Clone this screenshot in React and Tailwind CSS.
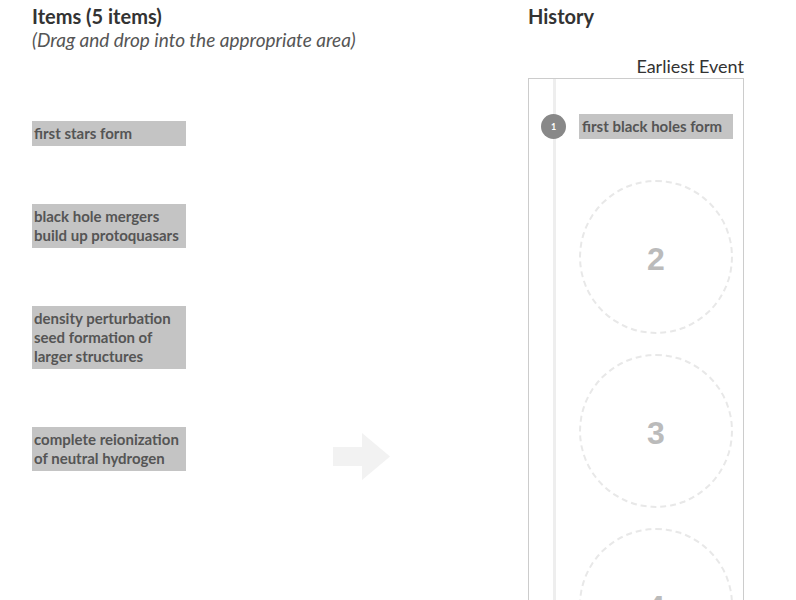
import React from 'react';

const items = [
  ['first stars form'],
  ['black hole mergers', 'build up protoquasars'],
  ['density perturbation', 'seed formation of', 'larger structures'],
  ['complete reionization', 'of neutral hydrogen'],
];

function Chip({ lines, className = '' }) {
  return (
    <div className={`w-[154px] bg-[#c4c4c4] px-[2px] py-[3px] text-[15px] font-bold leading-[19px] text-[#555] ${className}`}>
      {lines.map((l) => (
        <div key={l} className="whitespace-nowrap">{l}</div>
      ))}
    </div>
  );
}

function Slot({ n }) {
  return (
    <div className="flex h-[154px] w-[154px] items-center justify-center rounded-full border-2 border-dashed border-[#e8e8e8]">
      <span className="mt-[3px] text-[32px] font-bold text-[#bbb]" style={{ fontFamily: '"Liberation Sans", Arial, sans-serif' }}>{n}</span>
    </div>
  );
}

export default function App() {
  return (
    <div className="relative h-[600px] w-[796px] overflow-hidden bg-white text-[#333]" style={{ fontFamily: 'Lato, "Open Sans", sans-serif' }}>
      <div className="flex px-8">
        <div className="w-[154px] shrink-0">
          <h2 className="mt-[4px] whitespace-nowrap text-[20px] font-bold leading-6">Items (5 items)</h2>
          <p className="whitespace-nowrap text-[19px] italic leading-6 text-[#555]">(Drag and drop into the appropriate area)</p>
          <div className="mt-[69px] flex flex-col gap-[58px]">
            {items.map((lines) => (
              <Chip key={lines[0]} lines={lines} />
            ))}
          </div>
        </div>

        <div className="ml-[147px] mt-[433px] shrink-0">
          <svg width="57" height="47" viewBox="0 0 57 47">
            <polygon points="0,14 29,14 29,0 57,23.5 29,47 29,33 0,33" fill="#f2f2f2" />
          </svg>
        </div>

        <div className="ml-[138px] w-[216px] shrink-0">
          <h2 className="mt-[4px] text-[20px] font-bold leading-6">History</h2>
          <div className="mt-[26px] text-right text-[18px] leading-6">Earliest Event</div>
          <div className="relative h-[600px] border border-[#ccc] border-b-0">
            <div className="absolute left-[24px] top-0 h-full w-[3px] bg-[#eee]" />
            <div className="relative flex items-start pt-[35px]">
              <div className="ml-[12px] flex h-[25px] w-[25px] items-center justify-center rounded-full bg-[#888] text-[9px] font-bold text-white">1</div>
              <Chip lines={['first black holes form']} className="ml-[13px] px-[3px]" />
            </div>
            <div className="ml-[50px] mt-[41px] flex flex-col gap-[20px]">
              <Slot n={2} />
              <Slot n={3} />
              <Slot n={4} />
            </div>
          </div>
        </div>
      </div>
    </div>
  );
}
